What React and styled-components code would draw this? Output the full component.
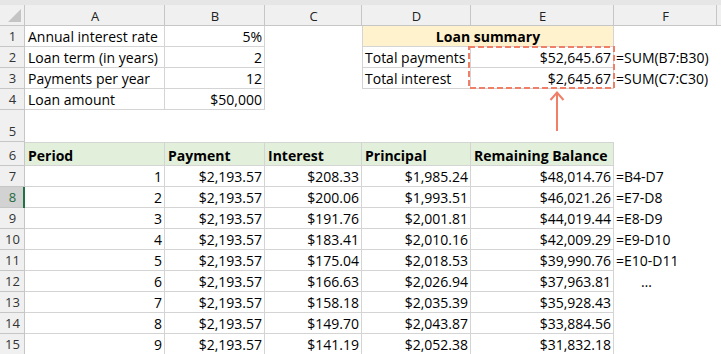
import styled, { createGlobalStyle } from "styled-components";

const GlobalStyle = createGlobalStyle`
  body {
    margin: 0;
    background: #ffffff;
    font-family: "Open Sans", "Liberation Sans", sans-serif;
  }
`;

const LINE = "#d4d4d4";
const HEAD_LINE = "#c6c6c6";
const ACCENT = "#f07f68";

const letters = ["A", "B", "C", "D", "E", "F", ""];

const table = [
  ["1", "$2,193.57", "$208.33", "$1,985.24", "$48,014.76", "=B4-D7"],
  ["2", "$2,193.57", "$200.06", "$1,993.51", "$46,021.26", "=E7-D8"],
  ["3", "$2,193.57", "$191.76", "$2,001.81", "$44,019.44", "=E8-D9"],
  ["4", "$2,193.57", "$183.41", "$2,010.16", "$42,009.29", "=E9-D10"],
  ["5", "$2,193.57", "$175.04", "$2,018.53", "$39,990.76", "=E10-D11"],
  ["6", "$2,193.57", "$166.63", "$2,026.94", "$37,963.81", "…"],
  ["7", "$2,193.57", "$158.18", "$2,035.39", "$35,928.43", ""],
  ["8", "$2,193.57", "$149.70", "$2,043.87", "$33,884.56", ""],
  ["9", "$2,193.57", "$141.19", "$2,052.38", "$31,832.18", ""],
];

function App() {
  return (
    <>
      <GlobalStyle />
      <Sheet>
        <TopStrip />
        <Grid>
          <Corner>
            <CornerMark />
          </Corner>
          {letters.map((l, i) => (
            <ColHead key={i}>{l}</ColHead>
          ))}

          <RowHead>1</RowHead>
          <Cell $box>Annual interest rate</Cell>
          <Cell $box $right>5%</Cell>
          <Cell />
          <Cell $box $left $span={2} $center $bold $bg="#fff2cc">Loan summary</Cell>
          <Cell />
          <Cell />

          <RowHead>2</RowHead>
          <Cell $box>Loan term (in years)</Cell>
          <Cell $box $right>2</Cell>
          <Cell />
          <Cell $box $left>Total payments</Cell>
          <Cell $box $right>$52,645.67</Cell>
          <Note>=SUM(B7:B30)</Note>
          <Cell />

          <RowHead>3</RowHead>
          <Cell $box>Payments per year</Cell>
          <Cell $box $right>12</Cell>
          <Cell />
          <Cell $box $left>Total interest</Cell>
          <Cell $box $right>$2,645.67</Cell>
          <Note>=SUM(C7:C30)</Note>
          <Cell />

          <RowHead>4</RowHead>
          <Cell $box>Loan amount</Cell>
          <Cell $box $right>$50,000</Cell>
          <Cell />
          <Cell />
          <Cell />
          <Cell />
          <Cell />

          <RowHead>5</RowHead>
          {letters.map((l, i) => (
            <Cell key={i} />
          ))}

          <RowHead>6</RowHead>
          {["Period", "Payment", "Interest", "Principal", "Remaining Balance"].map((h) => (
            <Cell key={h} $box $top $bold $bg="#e2efda">{h}</Cell>
          ))}
          <Cell />
          <Cell />

          {table.map((row, r) => (
            <Row key={r} n={r + 7} row={row} />
          ))}
        </Grid>

        <Marker width="148" height="44" viewBox="0 0 148 44">
          <rect x="1" y="1" width="145" height="41" fill="none" stroke={ACCENT} strokeWidth="2" strokeDasharray="6 3" />
        </Marker>
        <Arrow width="16" height="42" viewBox="0 0 16 42">
          <line x1="8" y1="3" x2="8" y2="41" stroke={ACCENT} strokeWidth="2" />
          <polyline points="1.5,10 8,2.5 14.5,10" fill="none" stroke={ACCENT} strokeWidth="2" />
        </Arrow>
      </Sheet>
    </>
  );
}

function Row({ n, row }) {
  const [period, payment, interest, principal, balance, note] = row;
  return (
    <>
      <RowHead $active={n === 8}>{n}</RowHead>
      <Cell $box $right>{period}</Cell>
      <Cell $box $right>{payment}</Cell>
      <Cell $box $right>{interest}</Cell>
      <Cell $box $right>{principal}</Cell>
      <Cell $box $right>{balance}</Cell>
      <Note $indent={note === "…"}>{note}</Note>
      <Cell />
    </>
  );
}

export default App;

const Sheet = styled.div`
  position: relative;
  width: 721px;
  height: 354px;
  overflow: hidden;
  background: #ffffff;
`;

const TopStrip = styled.div`
  height: 5px;
  background: #e6e6e6;
`;

const Grid = styled.div`
  display: grid;
  grid-template-columns: 25px 140px 100px 97px 109px 143px 103px 1fr;
  grid-template-rows: 21px repeat(4, 21px) 32px 24px repeat(9, 21px);
`;

const Corner = styled.div`
  position: relative;
  background: #f0f0f0;
  box-shadow: inset -1px -1px 0 ${HEAD_LINE};
`;

const CornerMark = styled.div`
  position: absolute;
  right: 4px;
  bottom: 4px;
  width: 0;
  height: 0;
  border-left: 13px solid transparent;
  border-bottom: 13px solid #c4c4c4;
`;

const ColHead = styled.div`
  display: flex;
  align-items: center;
  justify-content: center;
  background: #f0f0f0;
  box-shadow: inset -1px -1px 0 ${HEAD_LINE};
  color: #222222;
  font-size: 13px;
`;

const RowHead = styled.div`
  display: flex;
  align-items: flex-end;
  justify-content: center;
  padding-bottom: 2px;
  box-sizing: border-box;
  background: ${(p) => (p.$active ? "#d2d2d2" : "#f0f0f0")};
  box-shadow: ${(p) =>
    p.$active
      ? `inset -2px 0 0 #217346, inset 0 -1px 0 ${HEAD_LINE}`
      : `inset -1px -1px 0 ${HEAD_LINE}`};
  color: ${(p) => (p.$active ? "#1e6b41" : "#333333")};
  font-size: 13px;
  line-height: 17px;
`;

const Cell = styled.div`
  grid-column: span ${(p) => p.$span || 1};
  display: flex;
  align-items: flex-end;
  justify-content: ${(p) => (p.$right ? "flex-end" : p.$center ? "center" : "flex-start")};
  padding: 0 3px;
  box-sizing: border-box;
  background: ${(p) => p.$bg || "#ffffff"};
  box-shadow: ${(p) => {
    if (!p.$box) return "none";
    const s = [`inset -1px -1px 0 ${LINE}`];
    if (p.$top) s.push(`inset 0 1px 0 ${LINE}`);
    if (p.$left) s.push(`inset 1px 0 0 ${LINE}`);
    return s.join(", ");
  }};
  color: #000000;
  font-size: 14px;
  font-weight: ${(p) => (p.$bold ? 700 : 400)};
  line-height: 20px;
  white-space: nowrap;
`;

const Note = styled.div`
  display: flex;
  align-items: flex-end;
  padding-left: ${(p) => (p.$indent ? "27px" : "2px")};
  color: #000000;
  font-size: 14px;
  line-height: 20px;
  white-space: nowrap;
`;

const Marker = styled.svg`
  position: absolute;
  left: 468px;
  top: 46px;
`;

const Arrow = styled.svg`
  position: absolute;
  left: 549px;
  top: 90px;
`;
